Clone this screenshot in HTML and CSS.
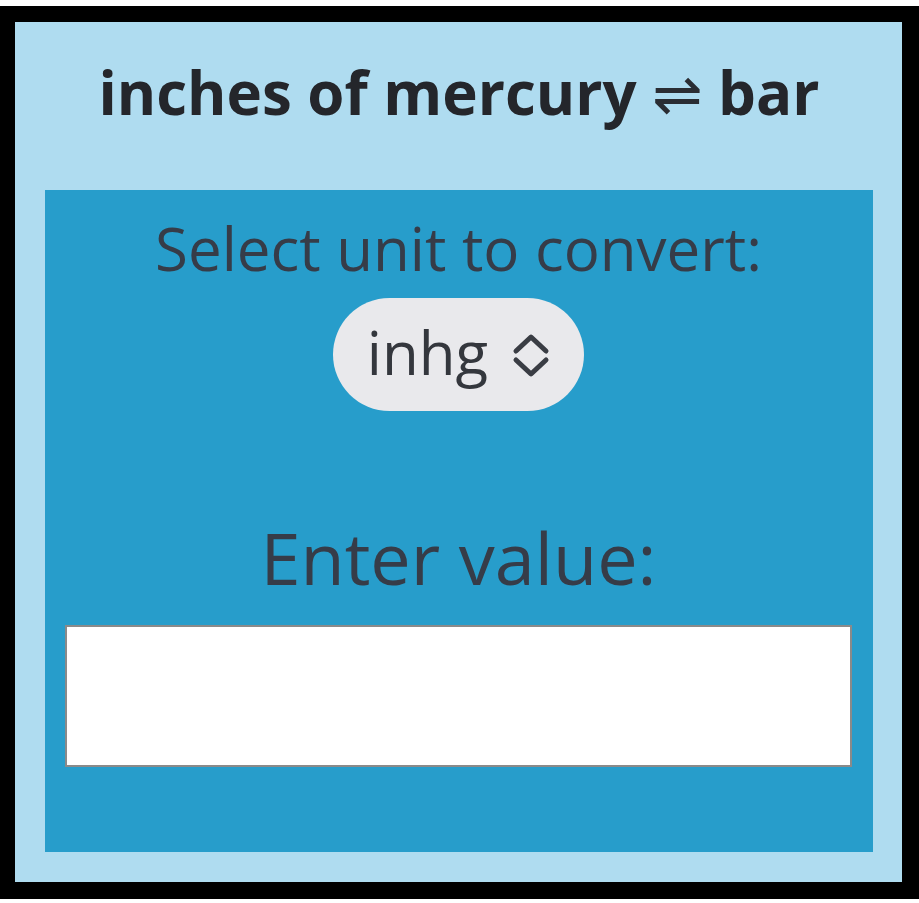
FILE: index.html
```html
<!DOCTYPE html>
<html>
  <head>
    <title>inches of mercury to bar</title>
    <link rel="stylesheet" href="styles.css">
  </head>
  <body>
    <div class="frame">
      <h1 class="title">inches of mercury <span class="swap">&#8652;</span> bar</h1>
      <div class="panel">
        <label class="unit-label" for="unit-select">Select unit to convert:</label>
        <div class="select-pill">
          <span class="select-value">inhg</span>
          <svg class="chevrons" width="38" height="46" viewBox="0 0 38 46">
            <polyline points="4,19 19,5 34,19" fill="none" stroke="#3a3d44" stroke-width="5" stroke-linecap="round" stroke-linejoin="round" />
            <polyline points="4,28 19,42 34,28" fill="none" stroke="#3a3d44" stroke-width="5" stroke-linecap="round" stroke-linejoin="round" />
          </svg>
        </div>
        <label class="value-label" for="value-input">Enter value:</label>
        <input id="value-input" class="value-input" type="text" />
      </div>
    </div>
  </body>
</html>
```

FILE: styles.css
```css
body {
  margin: 0;
  padding-top: 6px;
  background-color: #ffffff;
  font-family: "Open Sans", Arial, sans-serif;
}
.frame {
  box-sizing: border-box;
  width: 919px;
  height: 893px;
  border-style: solid;
  border-color: #000000;
  border-width: 16px 17px 17px 15px;
  background-color: #afdcf0;
  padding: 0 29px 30px 30px;
  display: flex;
  flex-direction: column;
}
.title {
  margin: 0;
  box-sizing: border-box;
  height: 168px;
  padding-top: 29px;
  text-align: center;
  font-size: 60px;
  line-height: 82px;
  font-weight: 700;
  color: #24262b;
}
.swap {
  font-family: "DejaVu Sans", sans-serif;
  font-weight: 400;
  color: #2a2d33;
}
.panel {
  flex: 1;
  background-color: #279dcb;
  display: flex;
  flex-direction: column;
  align-items: center;
  padding: 20px 21px 0 20px;
}
.unit-label {
  font-size: 60px;
  line-height: 76px;
  color: #363c48;
}
.select-pill {
  margin-top: 12px;
  width: 251px;
  height: 113px;
  box-sizing: border-box;
  border-radius: 57px;
  background-color: #e9e9ec;
  display: flex;
  align-items: center;
  justify-content: center;
  gap: 24px;
}
.select-value {
  font-size: 60px;
  color: #34373d;
  line-height: 1;
  margin-top: -6px;
}
.value-label {
  margin-top: 103px;
  font-size: 72px;
  line-height: 86px;
  color: #363c48;
}
.value-input {
  margin-top: 25px;
  width: 100%;
  height: 142px;
  box-sizing: border-box;
  border: 2px solid #8a8a8a;
  background-color: #ffffff;
  font-size: 40px;
}
```
